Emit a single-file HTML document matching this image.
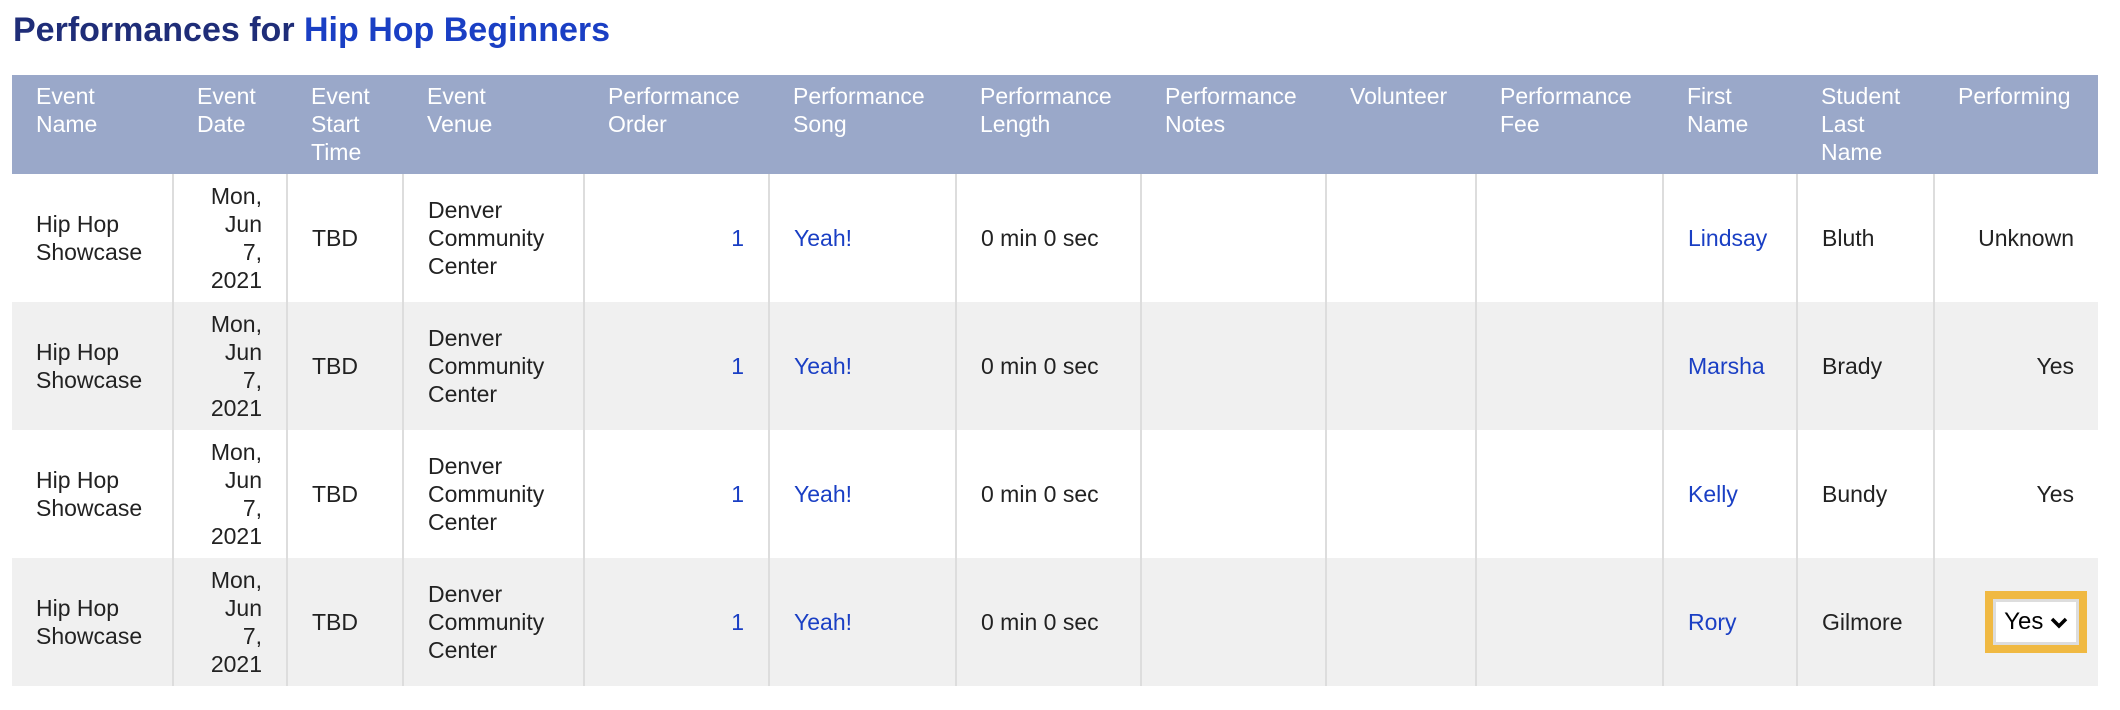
<!DOCTYPE html>
<html><head><meta charset="utf-8"><style>
body{margin:0;background:#fff;font-family:"Liberation Sans",Arial,sans-serif;width:2120px;height:710px;overflow:hidden}
h1{position:absolute;left:13px;top:11px;margin:0;font-size:34px;font-weight:bold;color:#1f2d78;}
h1 span{color:#1a3fc4}
table{position:absolute;left:12px;top:75px;width:2086px;border-collapse:collapse;table-layout:fixed;font-size:23px;line-height:28px;color:#222}
th{background:#9aa8c9;color:#fff;font-weight:normal;text-align:left;vertical-align:top;padding:7px 12px 0 24px;height:99px;box-sizing:border-box}
td{height:128px;padding:0 24px;border-left:2px solid #ddd;vertical-align:middle;box-sizing:border-box}
td:first-child{border-left:none}
tr.alt td{background:#f0f0f0}
.r{text-align:right}
a{color:#1a3fc4;text-decoration:none}
.sel{display:inline-block;border:8px solid #f0b942;padding:0;margin-right:-13px}
.sel span{display:inline-block;background:#fff;border:3px solid #ddd;padding:5px 8px 5px 8px;color:#000;font-size:24px;line-height:30px}
</style></head><body>
<h1>Performances for <span>Hip Hop Beginners</span></h1>
<table>
<colgroup><col style="width:161px"><col style="width:114px"><col style="width:116px"><col style="width:181px"><col style="width:185px"><col style="width:187px"><col style="width:185px"><col style="width:185px"><col style="width:150px"><col style="width:187px"><col style="width:134px"><col style="width:137px"><col style="width:164px"></colgroup>
<tr><th>Event Name</th><th>Event Date</th><th>Event Start Time</th><th>Event<br>Venue</th><th>Performance Order</th><th>Performance Song</th><th>Performance Length</th><th>Performance Notes</th><th>Volunteer</th><th>Performance Fee</th><th>First Name</th><th>Student Last Name</th><th>Performing</th></tr>
<tr><td>Hip Hop Showcase</td><td class="r">Mon,<br>Jun<br>7,<br>2021</td><td>TBD</td><td>Denver Community Center</td><td class="r"><a>1</a></td><td><a>Yeah!</a></td><td>0 min 0 sec</td><td></td><td></td><td></td><td><a>Lindsay</a></td><td>Bluth</td><td class="r">Unknown</td></tr>
<tr class="alt"><td>Hip Hop Showcase</td><td class="r">Mon,<br>Jun<br>7,<br>2021</td><td>TBD</td><td>Denver Community Center</td><td class="r"><a>1</a></td><td><a>Yeah!</a></td><td>0 min 0 sec</td><td></td><td></td><td></td><td><a>Marsha</a></td><td>Brady</td><td class="r">Yes</td></tr>
<tr><td>Hip Hop Showcase</td><td class="r">Mon,<br>Jun<br>7,<br>2021</td><td>TBD</td><td>Denver Community Center</td><td class="r"><a>1</a></td><td><a>Yeah!</a></td><td>0 min 0 sec</td><td></td><td></td><td></td><td><a>Kelly</a></td><td>Bundy</td><td class="r">Yes</td></tr>
<tr class="alt"><td>Hip Hop Showcase</td><td class="r">Mon,<br>Jun<br>7,<br>2021</td><td>TBD</td><td>Denver Community Center</td><td class="r"><a>1</a></td><td><a>Yeah!</a></td><td>0 min 0 sec</td><td></td><td></td><td></td><td><a>Rory</a></td><td>Gilmore</td><td class="r"><span class="sel"><span>Yes <svg width="18" height="12" viewBox="0 0 18 12" style="vertical-align:middle"><path d="M2 2 L9 9 L16 2" stroke="#000" stroke-width="3.5" fill="none"/></svg></span></span></td></tr>
</table>
</body></html>
